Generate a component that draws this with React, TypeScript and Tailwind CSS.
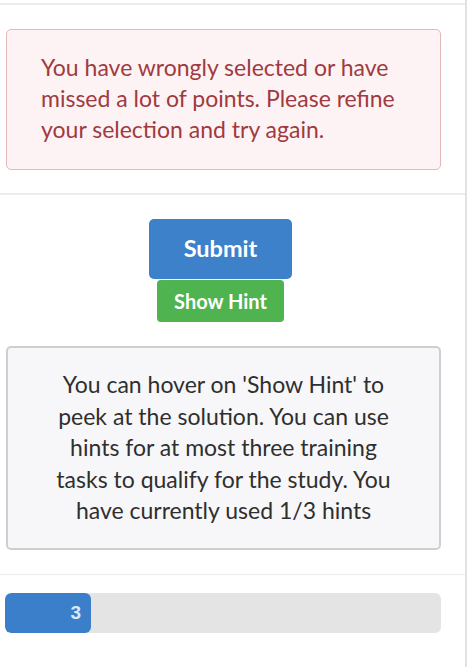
export default function App() {
  return (
    <div
      className="min-h-[667px] w-[467px] border-r-2 border-[#e2e2e2] bg-white"
      style={{ fontFamily: "Lato, 'Open Sans', sans-serif" }}
    >
      <div className="h-[3px]" />
      <hr className="border-t-2 border-[#ececec]" />

      <div className="pt-[24px] pb-[23px] pl-[6px] pr-[24px]">
        <div className="h-[141px] rounded-[5px] border border-[#e3b7bb] bg-[#fdf3f4] pl-[34px] pr-[20px] pt-[22px] text-[23px] leading-[31px] text-[#a03a40]">
          You have wrongly selected or have missed a lot of points. Please refine your selection and try again.
        </div>
      </div>

      <hr className="border-t-2 border-[#ececec]" />

      <div className="flex w-[441px] flex-col items-center pt-[24px]">
        <button className="h-[60px] w-[143px] rounded-[5px] bg-[#3d81cb] text-[23.5px] font-bold text-white">
          Submit
        </button>
        <button className="mt-[1px] h-[42px] w-[127px] rounded-[4px] bg-[#4fb350] text-[20px] font-bold text-white">
          Show Hint
        </button>
      </div>

      <div className="pt-[24px] pb-[24px] pl-[6px] pr-[24px]">
        <div className="h-[204px] rounded-[5px] border-2 border-[#cfcfcf] bg-[#f7f7f9] px-[40px] pt-[21px] text-center text-[23px] leading-[31.5px] text-[#2f2f2f]">
          You can hover on 'Show Hint' to peek at the solution. You can use hints for at most three training tasks to qualify for the study. You have currently used 1/3 hints
        </div>
      </div>

      <hr className="border-t border-[#ececec]" />

      <div className="pt-[18px] pl-[5px] pr-[24px]">
        <div className="flex h-[40px] overflow-hidden rounded-[6px] bg-[#e4e4e4]">
          <div
            className="flex h-full w-[86px] items-center justify-end rounded-[6px] bg-[#3b7fca] pr-[10px] text-[19px] font-bold text-[#dce8f7]"
            style={{ fontFamily: "'Liberation Sans', Arial, sans-serif" }}
          >
            3
          </div>
        </div>
      </div>
    </div>
  );
}
